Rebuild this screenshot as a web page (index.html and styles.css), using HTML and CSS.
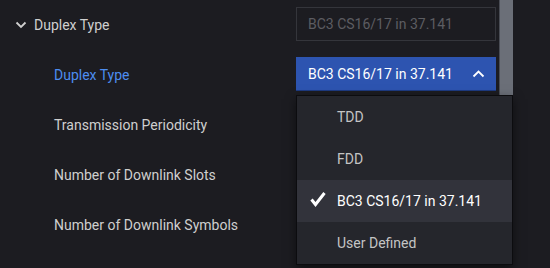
FILE: index.html
```html
<!DOCTYPE html>
<html lang="en">

<head>
    <meta charset="UTF-8">
    <title>Duplex Type</title>
    <link rel="stylesheet" href="styles.css">
</head>

<body>
    <div class="page">
        <div class="panel">
            <div class="row">
                <div class="group-title">
                    <svg class="caret" width="12" height="8" viewBox="0 0 12 8">
                        <polyline points="1.5,1.5 6,6 10.5,1.5" fill="none" stroke="#d0d0d0" stroke-width="1.8"/>
                    </svg>
                    <span>Duplex Type</span>
                </div>
                <div class="field disabled">BC3 CS16/17 in 37.141</div>
            </div>
            <div class="row">
                <div class="label active">Duplex Type</div>
                <div class="field select open">
                    <span>BC3 CS16/17 in 37.141</span>
                    <svg width="13" height="8" viewBox="0 0 13 8">
                        <polyline points="1.5,6.5 6.5,1.5 11.5,6.5" fill="none" stroke="#ffffff" stroke-width="1.8"/>
                    </svg>
                </div>
            </div>
            <div class="row">
                <div class="label">Transmission Periodicity</div>
            </div>
            <div class="row">
                <div class="label">Number of Downlink Slots</div>
            </div>
            <div class="row">
                <div class="label">Number of Downlink Symbols</div>
            </div>

            <div class="menu">
                <div class="menu-item">TDD</div>
                <div class="menu-item">FDD</div>
                <div class="menu-item selected">
                    <svg class="check" width="16" height="16" viewBox="0 0 16 16">
                        <polyline points="1.5,8.5 5.5,13.5 14.5,2" fill="none" stroke="#ffffff" stroke-width="3"/>
                    </svg>
                    BC3 CS16/17 in 37.141
                </div>
                <div class="menu-item">User Defined</div>
            </div>
        </div>
        <div class="scrollbar">
            <div class="thumb"></div>
        </div>
    </div>
</body>

</html>
```

FILE: styles.css
```css
body {
    margin: 0;
    background-color: #1c1c21;
    font-family: Roboto, "Liberation Sans", sans-serif;
    font-size: 14px;
    color: #cfcfcf;
}

.page {
    display: flex;
    height: 268px;
    overflow: hidden;
}

.panel {
    position: relative;
    width: 498px;
}

.row {
    display: flex;
    align-items: center;
    justify-content: space-between;
    height: 50px;
    padding-right: 2px;
}

.group-title {
    display: flex;
    align-items: center;
    padding-left: 15px;
}

.caret {
    margin-right: 7px;
}

.label {
    padding-left: 54px;
}

.label.active {
    color: #4d8df0;
}

.field {
    box-sizing: border-box;
    display: flex;
    align-items: center;
    justify-content: space-between;
    width: 200px;
    height: 34px;
    margin-top: -2px;
    padding: 0 11px 0 12px;
}

.field.disabled {
    border: 1px solid #34353b;
    color: #5c5d62;
    padding-left: 11px;
}

.field.select {
    background-color: #2d54b0;
    border-bottom: 1px solid #1d3a80;
    color: #ffffff;
}

.menu {
    position: absolute;
    left: 296px;
    top: 95px;
    width: 217px;
    box-sizing: border-box;
    background-color: #25262c;
    border: 1px solid #0c0c0f;
    box-shadow: 0 4px 10px rgba(0, 0, 0, 0.5);
    z-index: 10;
}

.menu-item {
    position: relative;
    height: 42px;
    line-height: 42px;
    padding-left: 40px;
    color: #c4c4c4;
}

.menu-item.selected {
    background-color: #32333b;
    color: #ffffff;
}

.check {
    position: absolute;
    left: 13px;
    top: 11px;
}

.scrollbar {
    width: 16px;
}

.thumb {
    width: 13px;
    height: 100px;
    margin-left: 1px;
    background-color: #6b6f78;
    border-left: 1px solid #4a4d55;
}
```
